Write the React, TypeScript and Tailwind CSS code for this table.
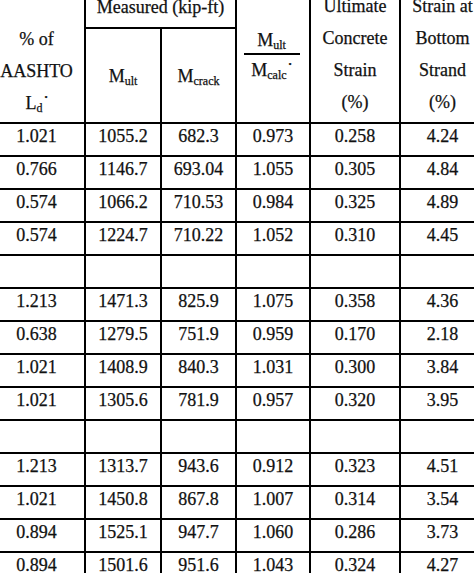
import React from "react";

const rows: (string[] | null)[] = [
  ["1.021", "1055.2", "682.3", "0.973", "0.258", "4.24"],
  ["0.766", "1146.7", "693.04", "1.055", "0.305", "4.84"],
  ["0.574", "1066.2", "710.53", "0.984", "0.325", "4.89"],
  ["0.574", "1224.7", "710.22", "1.052", "0.310", "4.45"],
  null,
  ["1.213", "1471.3", "825.9", "1.075", "0.358", "4.36"],
  ["0.638", "1279.5", "751.9", "0.959", "0.170", "2.18"],
  ["1.021", "1408.9", "840.3", "1.031", "0.300", "3.84"],
  ["1.021", "1305.6", "781.9", "0.957", "0.320", "3.95"],
  null,
  ["1.213", "1313.7", "943.6", "0.912", "0.323", "4.51"],
  ["1.021", "1450.8", "867.8", "1.007", "0.314", "3.54"],
  ["0.894", "1525.1", "947.7", "1.060", "0.286", "3.73"],
  ["0.894", "1501.6", "951.6", "1.043", "0.324", "4.27"],
];

function Sub({ children }: { children: React.ReactNode }) {
  return <span className="text-[12px] leading-none align-[-3px]">{children}</span>;
}

function Star() {
  return <span className="text-[9px] leading-none align-[9px] ml-[2px]">•</span>;
}

export default function App() {
  return (
    <div className="w-[474px] h-[573px] overflow-hidden bg-white font-['Liberation_Serif',serif] text-[18px] text-[#111] [-webkit-text-stroke:0.25px_#111]">
      <div className="ml-[-11px] mt-[-14px] grid w-max grid-cols-[95px_74px_73px_72px_88px_83px] grid-rows-[41px_93px_repeat(14,31px)] gap-[2px] bg-black">
        {/* Column 1 header */}
        <div className="row-span-2 bg-white flex flex-col items-center justify-end pb-[3px] leading-[32px]">
          <div className="h-[32px]">% of</div>
          <div className="h-[32px]">AASHTO</div>
          <div className="h-[32px]">
            L<Sub>d</Sub>
            <Star />
          </div>
        </div>
        {/* Measured */}
        <div className="col-span-2 bg-white flex items-center justify-center leading-[22px]">
          Measured (kip-ft)
        </div>
        {/* Mult / Mcalc */}
        <div className="row-span-2 bg-white flex flex-col items-center pt-[41px] pr-[3px]">
          <div className="h-[26px] leading-[26px]">
            M<Sub>ult</Sub>
          </div>
          <div className="h-[2px] w-[56px] bg-black" />
          <div className="h-[30px] leading-[30px]">
            M<Sub>calc</Sub>
            <Star />
          </div>
        </div>
        {/* Ultimate concrete strain */}
        <div className="row-span-2 bg-white flex flex-col items-center justify-center leading-[32px]">
          <div>Ultimate</div>
          <div>Concrete</div>
          <div>Strain</div>
          <div>(%)</div>
        </div>
        {/* Strain at bottom strand */}
        <div className="row-span-2 bg-white flex flex-col items-center justify-center leading-[32px]">
          <div>Strain at</div>
          <div>Bottom</div>
          <div>Strand</div>
          <div>(%)</div>
        </div>
        {/* Mult, Mcrack */}
        <div className="bg-white flex items-center justify-center leading-[24px]">
          <span>
            M<Sub>ult</Sub>
          </span>
        </div>
        <div className="bg-white flex items-center justify-center leading-[24px]">
          <span>
            M<Sub>crack</Sub>
          </span>
        </div>
        {/* Data rows */}
        {rows.map((r, i) =>
          r ? (
            r.map((v, j) => (
              <div key={`${i}-${j}`} className="bg-white text-center pt-[2px] leading-[20px]">
                {v}
              </div>
            ))
          ) : (
            [0, 1, 2, 3, 4, 5].map((j) => <div key={`${i}-${j}`} className="bg-white" />)
          )
        )}
      </div>
    </div>
  );
}
